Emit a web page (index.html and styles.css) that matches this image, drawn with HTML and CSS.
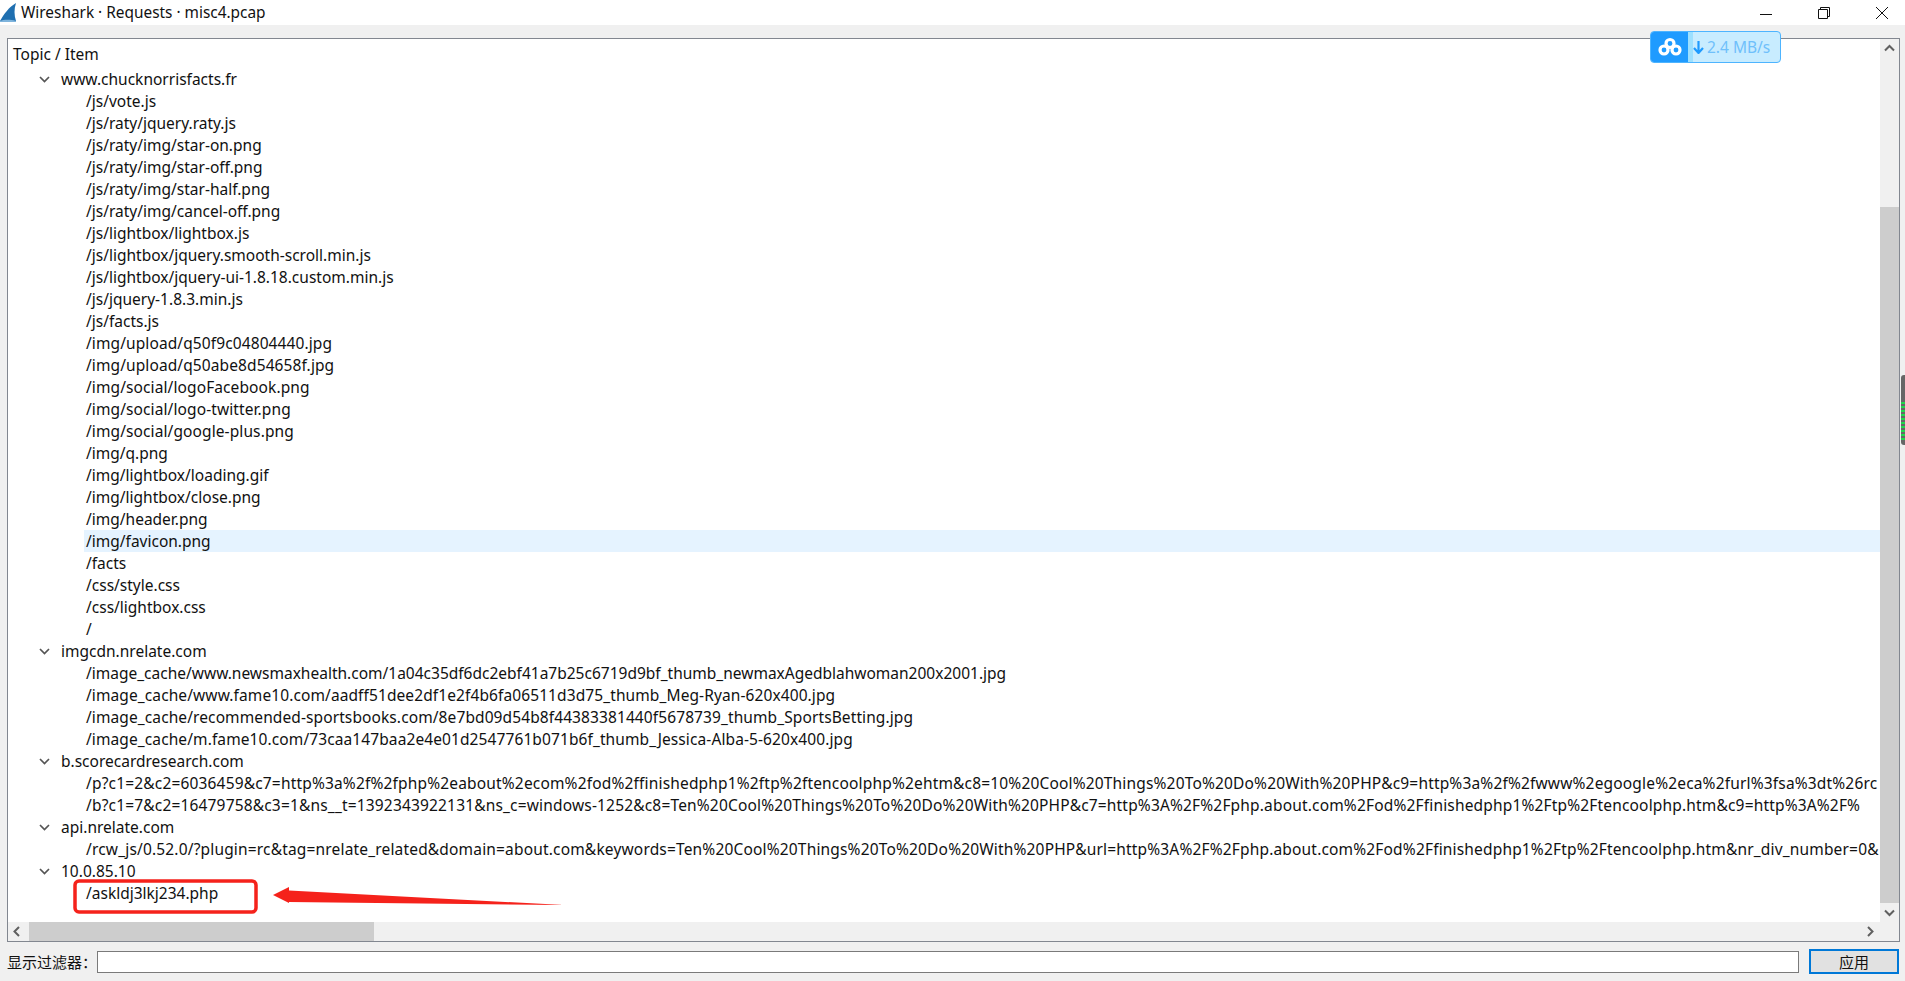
FILE: index.html
```html
<!DOCTYPE html>
<html lang="zh">
<head>
<meta charset="utf-8">
<title>Wireshark · Requests · misc4.pcap</title>
<link rel="stylesheet" href="styles.css">
</head>
<body>
<div class="window">
  <header class="titlebar">
    <svg class="app-icon" width="17" height="20" viewBox="0 0 17 20"><path d="M0 18C4 11 9 4 16 0C14 6 14 12 16 18Z" fill="#1f6fb0"/><path d="M0 18C3 17 9 16 16 18L16 19L0 19Z" fill="#7fb4dc"/></svg>
    <span class="title">Wireshark · Requests · misc4.pcap</span>
    <div class="controls">
      <svg class="ctl" width="14" height="14" viewBox="0 0 14 14"><path d="M1 8.5H13" stroke="#111" fill="none"/></svg>
      <svg class="ctl" width="14" height="14" viewBox="0 0 14 14"><path d="M1.5 3.5H10.5V12.5H1.5ZM3.5 3.5V1.5H12.5V10.5H10.5" stroke="#111" fill="none"/></svg>
      <svg class="ctl" width="14" height="14" viewBox="0 0 14 14"><path d="M1 1L13 13M13 1L1 13" stroke="#111" fill="none"/></svg>
    </div>
  </header>

  <main class="frame">
    <div class="tree">
      <div class="head">Topic / Item</div>
      <div class="row topic"><svg class="chev" width="11" height="7" viewBox="0 0 11 7"><path d="M1 1L5.500 5.500L10 1" stroke="#555" stroke-width="1.700" fill="none"/></svg>www.chucknorrisfacts.fr</div>
      <div class="row item">/js/vote.js</div>
      <div class="row item">/js/raty/jquery.raty.js</div>
      <div class="row item">/js/raty/img/star-on.png</div>
      <div class="row item">/js/raty/img/star-off.png</div>
      <div class="row item">/js/raty/img/star-half.png</div>
      <div class="row item">/js/raty/img/cancel-off.png</div>
      <div class="row item">/js/lightbox/lightbox.js</div>
      <div class="row item">/js/lightbox/jquery.smooth-scroll.min.js</div>
      <div class="row item">/js/lightbox/jquery-ui-1.8.18.custom.min.js</div>
      <div class="row item">/js/jquery-1.8.3.min.js</div>
      <div class="row item">/js/facts.js</div>
      <div class="row item loose">/img/upload/q50f9c04804440.jpg</div>
      <div class="row item loose">/img/upload/q50abe8d54658f.jpg</div>
      <div class="row item loose">/img/social/logoFacebook.png</div>
      <div class="row item loose">/img/social/logo-twitter.png</div>
      <div class="row item loose">/img/social/google-plus.png</div>
      <div class="row item">/img/q.png</div>
      <div class="row item">/img/lightbox/loading.gif</div>
      <div class="row item">/img/lightbox/close.png</div>
      <div class="row item">/img/header.png</div>
      <div class="row item selected">/img/favicon.png</div>
      <div class="row item">/facts</div>
      <div class="row item">/css/style.css</div>
      <div class="row item">/css/lightbox.css</div>
      <div class="row item">/</div>
      <div class="row topic"><svg class="chev" width="11" height="7" viewBox="0 0 11 7"><path d="M1 1L5.500 5.500L10 1" stroke="#555" stroke-width="1.700" fill="none"/></svg>imgcdn.nrelate.com</div>
      <div class="row item">/image_cache/www.newsmaxhealth.com/1a04c35df6dc2ebf41a7b25c6719d9bf_thumb_newmaxAgedblahwoman200x2001.jpg</div>
      <div class="row item loose">/image_cache/www.fame10.com/aadff51dee2df1e2f4b6fa06511d3d75_thumb_Meg-Ryan-620x400.jpg</div>
      <div class="row item loose">/image_cache/recommended-sportsbooks.com/8e7bd09d54b8f44383381440f5678739_thumb_SportsBetting.jpg</div>
      <div class="row item loose">/image_cache/m.fame10.com/73caa147baa2e4e01d2547761b071b6f_thumb_Jessica-Alba-5-620x400.jpg</div>
      <div class="row topic"><svg class="chev" width="11" height="7" viewBox="0 0 11 7"><path d="M1 1L5.500 5.500L10 1" stroke="#555" stroke-width="1.700" fill="none"/></svg>b.scorecardresearch.com</div>
      <div class="row item looser">/p?c1=2&amp;c2=6036459&amp;c7=http%3a%2f%2fphp%2eabout%2ecom%2fod%2ffinishedphp1%2ftp%2ftencoolphp%2ehtm&amp;c8=10%20Cool%20Things%20To%20Do%20With%20PHP&amp;c9=http%3a%2f%2fwww%2egoogle%2eca%2furl%3fsa%3dt%26rc</div>
      <div class="row item looser">/b?c1=7&amp;c2=16479758&amp;c3=1&amp;ns__t=1392343922131&amp;ns_c=windows-1252&amp;c8=Ten%20Cool%20Things%20To%20Do%20With%20PHP&amp;c7=http%3A%2F%2Fphp.about.com%2Fod%2Ffinishedphp1%2Ftp%2Ftencoolphp.htm&amp;c9=http%3A%2F%</div>
      <div class="row topic"><svg class="chev" width="11" height="7" viewBox="0 0 11 7"><path d="M1 1L5.500 5.500L10 1" stroke="#555" stroke-width="1.700" fill="none"/></svg>api.nrelate.com</div>
      <div class="row item looser">/rcw_js/0.52.0/?plugin=rc&amp;tag=nrelate_related&amp;domain=about.com&amp;keywords=Ten%20Cool%20Things%20To%20Do%20With%20PHP&amp;url=http%3A%2F%2Fphp.about.com%2Fod%2Ffinishedphp1%2Ftp%2Ftencoolphp.htm&amp;nr_div_number=0&amp;</div>
      <div class="row topic"><svg class="chev" width="11" height="7" viewBox="0 0 11 7"><path d="M1 1L5.500 5.500L10 1" stroke="#555" stroke-width="1.700" fill="none"/></svg>10.0.85.10</div>
      <div class="row item">/askldj3lkj234.php</div>
    </div>
    <div class="vbar">
      <svg class="arrow" width="19" height="19" viewBox="0 0 19 19"><path d="M5 11.5L9.5 7L14 11.5" stroke="#606060" stroke-width="2" fill="none"/></svg>
      <div class="vspace"></div>
      <div class="vthumb"></div>
      <svg class="arrow" width="19" height="19" viewBox="0 0 19 19"><path d="M5 7.5L9.5 12L14 7.5" stroke="#606060" stroke-width="2" fill="none"/></svg>
    </div>
    <div class="hbar">
      <svg class="arrow" width="21" height="19" viewBox="0 0 21 19"><path d="M11 5L6.500 9.500L11 14" stroke="#606060" stroke-width="2" fill="none"/></svg>
      <div class="hthumb"></div>
      <div class="hspace"></div>
      <svg class="arrow" width="19" height="19" viewBox="0 0 19 19"><path d="M7 5L11.500 9.500L7 14" stroke="#606060" stroke-width="2" fill="none"/></svg>
    </div>
    <div class="corner"></div>
  </main>

  <footer class="filter">
    <label class="filter-label" for="f">显示过滤器：</label>
    <input class="filter-input" id="f" type="text">
    <button class="apply" type="button">应用</button>
  </footer>
</div>

<div class="speed">
  <div class="speed-logo">
    <svg width="26" height="20" viewBox="0 0 26 20"><g fill="none" stroke="#fff" stroke-width="3.2"><circle cx="13" cy="6.500" r="4"/><circle cx="7" cy="13" r="4"/><circle cx="19" cy="13" r="4"/></g></svg>
  </div>
  <div class="speed-strip"></div>
  <div class="speed-text"><svg width="11" height="13" viewBox="0 0 11 13"><path d="M5.500 0V11M1 7L5.500 12L10 7" stroke="#1f9bff" stroke-width="2.200" fill="none"/></svg>2.4 MB/s</div>
</div>

<div class="edge"><div class="edge-lines"></div></div>

<svg class="annotation" width="580" height="50" viewBox="0 0 580 50">
  <rect x="75" y="2" width="181" height="31" rx="4" fill="none" stroke="#f5221b" stroke-width="3.500"/>
  <path d="M273 16L289 8L289 11.500L564 26L289 23L289 24Z" fill="#f5221b"/>
</svg>
</body>
</html>
```
FILE: styles.css
```css
* { box-sizing: border-box; }
html, body { margin: 0; height: 100%; overflow: hidden; }
body { background: #f0f0f0; font-family: "Noto Sans", "Noto Sans CJK SC", sans-serif; color: #111; }
.window { display: flex; flex-direction: column; height: 981px; }

.titlebar { flex: none; height: 25px; background: #fff; display: flex; align-items: center; }
.app-icon { flex: none; margin: 0 4px 0 0; }
.title { font-size: 15.4px; line-height: 22px; }
.controls { margin-left: auto; display: flex; gap: 44px; padding-right: 16px; }
.ctl { display: block; }

.frame { flex: 1; margin: 13px 5px 0 7px; border: 1px solid #828790; background: #fff; display: grid; grid-template-columns: 1fr 19px; grid-template-rows: 1fr 19px; min-height: 0; }
.tree { overflow: hidden; padding-top: 4px; font-size: 15.5px; min-width: 0; }
.head { height: 25px; line-height: 22px; padding-left: 5px; }
.row { height: 22px; line-height: 22px; white-space: nowrap; overflow: hidden; }
.topic { display: flex; align-items: center; padding-left: 31px; }
.chev { flex: none; margin-right: 11px; }
.item { margin-left: 76px; padding-left: 2px; }
.loose { letter-spacing: 0.1px; }
.looser { letter-spacing: 0.17px; }
.selected { background: #e5f3ff; }

.vbar { display: flex; flex-direction: column; background: #f0f0f0; }
.vspace { height: 149px; }
.vthumb { flex: 1; background: #cdcdcd; }
.hbar { display: flex; background: #f0f0f0; }
.hthumb { width: 345px; background: #cdcdcd; }
.hspace { flex: 1; }
.arrow { flex: none; display: block; }
.corner { background: #f0f0f0; }

.filter { flex: none; height: 39px; display: flex; align-items: center; padding: 0 6px 0 7px; }
.filter-label { width: 90px; font-size: 15px; }
.filter-input { flex: 1; height: 22px; border: 1px solid #7a7a7a; background: #fff; padding: 0; }
.apply { width: 90px; height: 25px; margin-left: 10px; border: 2px solid #0078d7; background: #e1e1e1; font: 15px "Noto Sans CJK SC", sans-serif; color: #111; padding: 0; }

.speed { position: absolute; left: 1650px; top: 31px; width: 131px; height: 32px; display: flex; border: 1px solid #4db4ff; border-radius: 4px; overflow: hidden; background: #c8ecff; }
.speed-logo { width: 37px; background: #1f9bff; display: flex; align-items: center; justify-content: center; }
.speed-strip { width: 5px; background: #9de0ff; }
.speed-text { flex: 1; display: flex; align-items: center; gap: 3px; font-size: 15.5px; color: #6fc0fb; }

.edge { position: absolute; left: 1901px; top: 375px; width: 4px; height: 70px; background: #666; border-radius: 3px 0 0 3px; padding-top: 27px; }
.edge-lines { height: 40px; background: repeating-linear-gradient(#22d64a 0 2px, #666 2px 4px); }

.annotation { position: absolute; left: 0; top: 879px; }
```
